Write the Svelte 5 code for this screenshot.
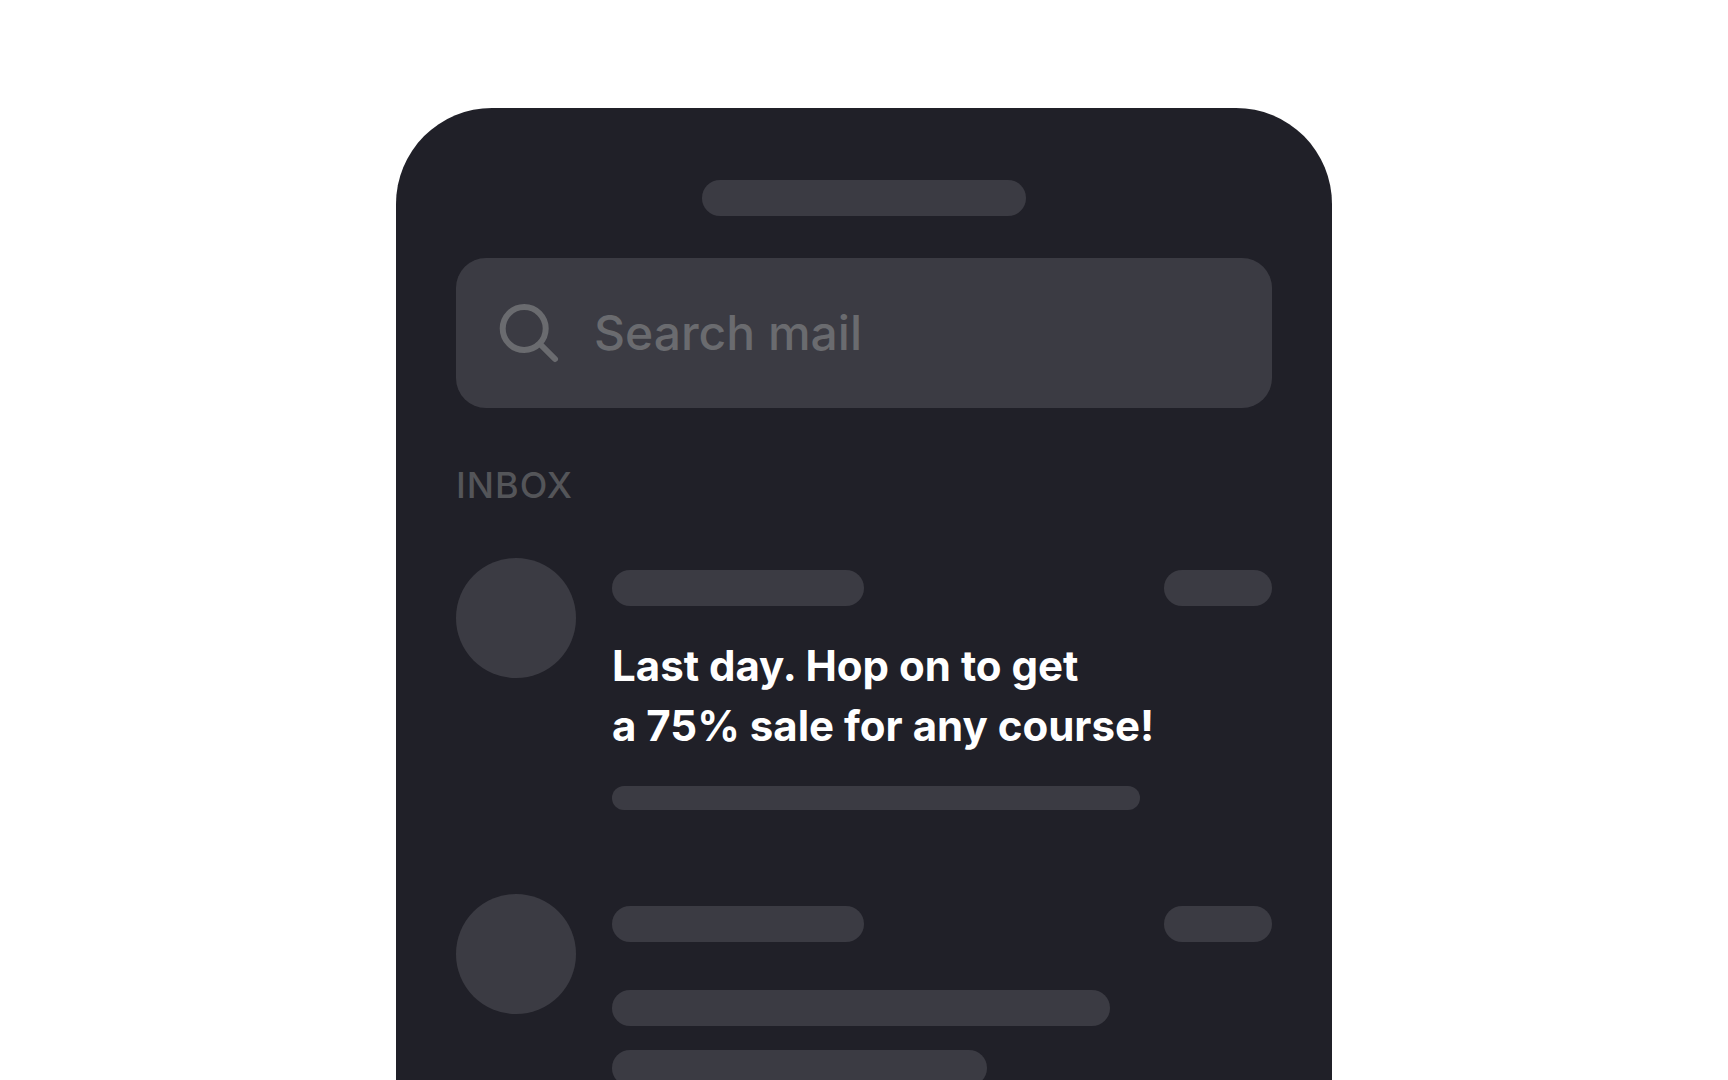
<script lang="ts">
  interface Mail {
    subject?: string[];
    bars: { width: number; thin?: boolean }[];
  }

  const mails: Mail[] = [
    {
      subject: ["Last day. Hop on to get", "a 75% sale for any course!"],
      bars: [{ width: 528, thin: true }],
    },
    {
      bars: [{ width: 498 }, { width: 375 }],
    },
  ];

  let query = $state("");
</script>

<main class="stage">
  <div class="phone">
    <div class="notch"></div>

    <label class="search">
      <svg class="search-icon" viewBox="0 0 72 72" fill="none" aria-hidden="true">
        <circle cx="32.2" cy="31.5" r="21.5" />
        <path d="M48 47L63 62" />
      </svg>
      <input type="search" placeholder="Search mail" aria-label="Search mail" bind:value={query} />
    </label>

    <h2 class="section-title">INBOX</h2>

    <ul class="mail-list">
      {#each mails as mail}
        <li class="mail">
          <div class="avatar"></div>
          <div class="mail-body">
            <div class="mail-header">
              <span class="bar sender"></span>
              <span class="bar time"></span>
            </div>
            {#if mail.subject}
              <p class="subject">
                {#each mail.subject as line}
                  <span>{line}</span>
                {/each}
              </p>
            {/if}
            <div class="preview" class:no-subject={!mail.subject}>
              {#each mail.bars as bar}
                <span class="bar" class:thin={bar.thin} style="width: {bar.width}px"></span>
              {/each}
            </div>
          </div>
        </li>
      {/each}
    </ul>
  </div>
</main>

<style>
  :global(body) {
    margin: 0;
    background: #ffffff;
  }
  .stage {
    box-sizing: border-box;
    display: flex;
    justify-content: center;
    height: 100vh;
    padding-top: 108px;
    overflow: hidden;
    font-family: Inter, "Liberation Sans", sans-serif;
  }
  .phone {
    box-sizing: border-box;
    width: 100%;
    max-width: 936px;
    min-height: 100%;
    height: max-content;
    padding: 72px 60px;
    border-radius: 96px 96px 0 0;
    background: #202028;
  }
  .notch {
    width: 324px;
    height: 36px;
    margin: 0 auto 42px;
    border-radius: 18px;
    background: #3b3b43;
  }
  .search {
    display: flex;
    align-items: center;
    gap: 30px;
    height: 150px;
    padding: 0 36px;
    border-radius: 30px;
    background: #3b3b43;
  }
  .search-icon {
    flex: none;
    width: 72px;
    height: 72px;
    stroke: #6a6b6f;
    stroke-width: 6;
    stroke-linecap: round;
  }
  input {
    flex: 1;
    min-width: 0;
    padding: 0;
    border: none;
    outline: none;
    background: none;
    color: #ffffff;
    font: 500 48px/60px Inter, "Liberation Sans", sans-serif;
    appearance: none;
  }
  input::placeholder {
    color: #6a6b6f;
    opacity: 1;
  }
  .section-title {
    margin: 52px 0 48px;
    color: #545559;
    font-size: 36px;
    font-weight: 500;
    line-height: 50px;
    letter-spacing: 1px;
  }
  .mail-list {
    display: flex;
    flex-direction: column;
    gap: 84px;
    margin: 0;
    padding: 0;
    list-style: none;
  }
  .mail {
    display: flex;
    gap: 36px;
  }
  .avatar {
    flex: none;
    width: 120px;
    height: 120px;
    border-radius: 50%;
    background: #3b3b43;
  }
  .mail-body {
    flex: 1;
    min-width: 0;
    padding-top: 12px;
  }
  .mail-header {
    display: flex;
    justify-content: space-between;
  }
  .bar {
    display: block;
    max-width: 100%;
    height: 36px;
    border-radius: 18px;
    background: #3b3b43;
  }
  .bar.thin {
    height: 24px;
  }
  .sender {
    width: 252px;
  }
  .time {
    width: 108px;
  }
  .subject {
    margin: 30px 0 0;
    color: #ffffff;
    font-size: 42px;
    font-weight: 700;
    line-height: 60px;
  }
  .subject span {
    display: block;
  }
  .preview {
    display: flex;
    flex-direction: column;
    gap: 24px;
    margin-top: 30px;
  }
  .preview.no-subject {
    margin-top: 48px;
  }
</style>
